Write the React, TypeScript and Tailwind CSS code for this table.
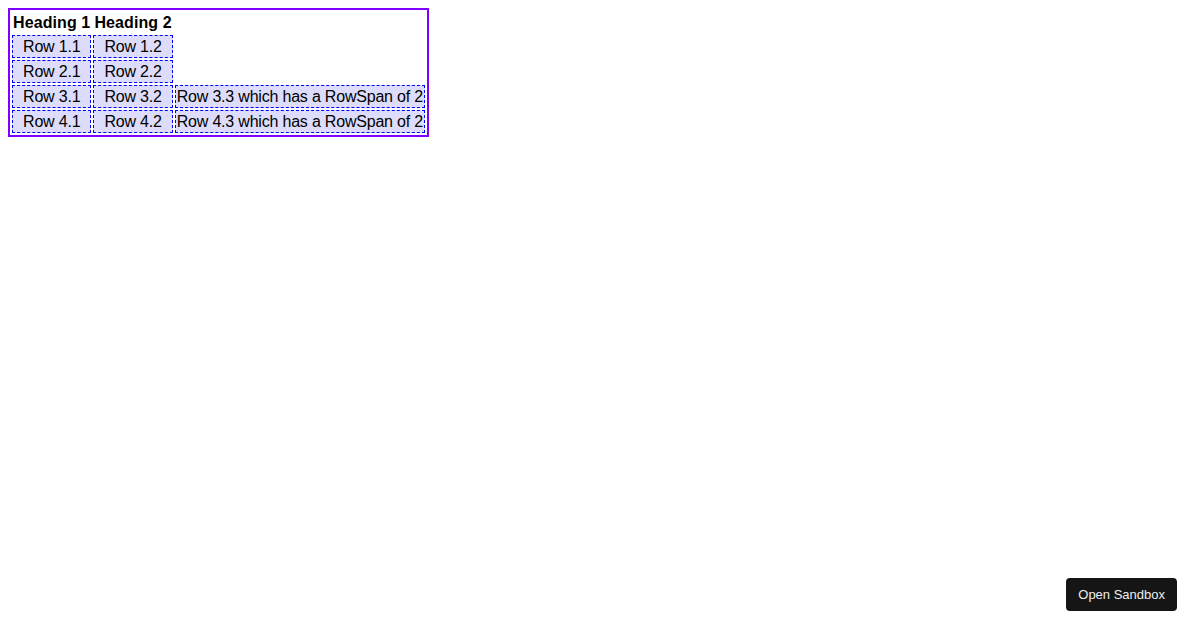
const rows = [
  ['Row 1.1', 'Row 1.2'],
  ['Row 2.1', 'Row 2.2'],
  ['Row 3.1', 'Row 3.2', 'Row 3.3 which has a RowSpan of 2'],
  ['Row 4.1', 'Row 4.2', 'Row 4.3 which has a RowSpan of 2'],
];

export default function App() {
  return (
    <div className="min-h-[630px] bg-white font-['Liberation_Sans',Arial,sans-serif] text-base leading-[normal] text-black">
      <table className="m-2 border-2 border-solid border-[#8000ff] border-separate border-spacing-[2px]">
        <thead>
          <tr>
            <th className="h-[21px] p-px text-left font-bold tracking-[0.1px]">Heading 1</th>
            <th className="h-[21px] p-px text-left font-bold tracking-[0.1px]">Heading 2</th>
          </tr>
        </thead>
        <tbody>
          {rows.map((row, i) => (
            <tr key={i}>
              {row.map((cell) => (
                <td
                  key={cell}
                  className="h-[23px] border border-dashed border-[#0000ff] bg-[#ddddfb] p-px text-center tracking-[-0.2px]"
                >
                  {cell}
                </td>
              ))}
            </tr>
          ))}
        </tbody>
      </table>

      <button className="fixed bottom-[19px] right-[23px] h-[33px] rounded bg-[#151515] px-3 font-['Liberation_Sans',Arial,sans-serif] text-[13px] text-[#eeeeee]">
        Open Sandbox
      </button>
    </div>
  );
}
